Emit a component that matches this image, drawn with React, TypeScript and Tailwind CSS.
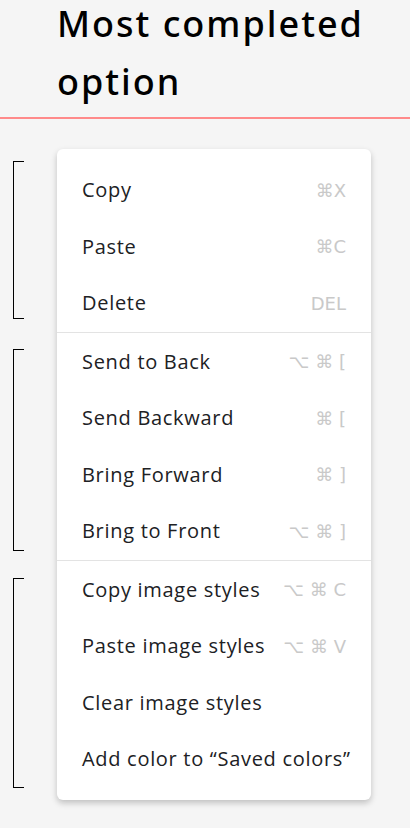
import React from 'react';

type Item = { label: string; keys?: string };

const sections: Item[][] = [
  [
    { label: 'Copy', keys: '⌘X' },
    { label: 'Paste', keys: '⌘C' },
    { label: 'Delete', keys: 'DEL' },
  ],
  [
    { label: 'Send to Back', keys: '⌥ ⌘ [' },
    { label: 'Send Backward', keys: '⌘ [' },
    { label: 'Bring Forward', keys: '⌘ ]' },
    { label: 'Bring to Front', keys: '⌥ ⌘ ]' },
  ],
  [
    { label: 'Copy image styles', keys: '⌥ ⌘ C' },
    { label: 'Paste image styles', keys: '⌥ ⌘ V' },
    { label: 'Clear image styles' },
    { label: 'Add color to “Saved colors”' },
  ],
];

// bracket heights and gaps taken from the reference
const brackets = [
  { top: 'mt-[42px]', height: 'h-[158px]' },
  { top: 'mt-[30px]', height: 'h-[202px]' },
  { top: 'mt-[27px]', height: 'h-[210px]' },
];

function Bracket({ top, height }: { top: string; height: string }) {
  return (
    <div
      className={`${top} ${height} w-[11px] border-l-[1.5px] border-t-[1.5px] border-b-[1.5px] border-black`}
    />
  );
}

export default function App() {
  return (
    <div className="min-h-[828px] w-[410px] bg-[#f5f5f5] overflow-hidden">
      <h1
        className="pl-[57px] -mt-[5px] pb-[6px] text-[36px] leading-[58px] tracking-[2px] text-black font-medium"
        style={{ fontFamily: '"Noto Sans", sans-serif' }}
      >
        Most completed
        <br />
        option
      </h1>
      <div className="h-[2px] bg-[#ff8a8a]" />

      <div className="flex">
        <div className="flex flex-col pl-[13px] w-[57px]">
          {brackets.map((b, i) => (
            <Bracket key={i} top={b.top} height={b.height} />
          ))}
        </div>

        <div
          className="mt-[30px] w-[314px] bg-white rounded-[6px] shadow-[0_3px_6px_rgba(0,0,0,0.22)] pt-[13px] pb-[12px]"
          style={{ fontFamily: '"Open Sans", sans-serif' }}
        >
          {sections.map((items, si) => (
            <div key={si} className={si > 0 ? 'border-t border-[#e3e3e3] pt-[1px]' : ''}>
              {items.map((it) => (
                <div
                  key={it.label}
                  className="h-[56.5px] flex items-center justify-between pl-[25px] pr-[25px]"
                >
                  <span className="text-[20px] tracking-[0.7px] text-[#202124] whitespace-nowrap">
                    {it.label}
                  </span>
                  {it.keys && (
                    <span
                      className="text-[18px] text-[#c9c9c9] whitespace-nowrap"
                      style={{ fontFamily: '"DejaVu Sans", sans-serif' }}
                    >
                      {it.keys}
                    </span>
                  )}
                </div>
              ))}
            </div>
          ))}
        </div>
      </div>
    </div>
  );
}
